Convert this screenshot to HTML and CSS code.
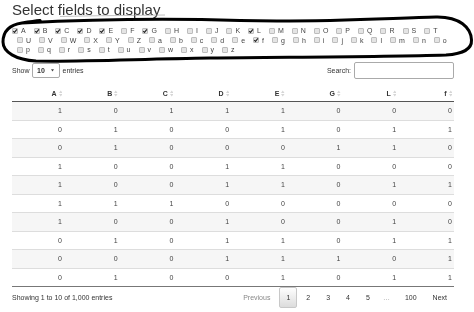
FILE: index.html
```html
<!DOCTYPE html>
<html>
<head>
<meta charset="utf-8">
<link rel="stylesheet" href="styles.css">
</head>
<body>
<div class="page">
  <h3 class="title">Select fields to display</h3>
  <div class="fields">
    <label class="opt"><span class="cb on"><svg viewBox="0 0 6 6"><path d="M1.2 3.1 L2.5 4.4 L4.9 1.4"/></svg></span><span class="lt">A</span></label>
    <label class="opt"><span class="cb on"><svg viewBox="0 0 6 6"><path d="M1.2 3.1 L2.5 4.4 L4.9 1.4"/></svg></span><span class="lt">B</span></label>
    <label class="opt"><span class="cb on"><svg viewBox="0 0 6 6"><path d="M1.2 3.1 L2.5 4.4 L4.9 1.4"/></svg></span><span class="lt">C</span></label>
    <label class="opt"><span class="cb on"><svg viewBox="0 0 6 6"><path d="M1.2 3.1 L2.5 4.4 L4.9 1.4"/></svg></span><span class="lt">D</span></label>
    <label class="opt"><span class="cb on"><svg viewBox="0 0 6 6"><path d="M1.2 3.1 L2.5 4.4 L4.9 1.4"/></svg></span><span class="lt">E</span></label>
    <label class="opt"><span class="cb"></span><span class="lt">F</span></label>
    <label class="opt"><span class="cb on"><svg viewBox="0 0 6 6"><path d="M1.2 3.1 L2.5 4.4 L4.9 1.4"/></svg></span><span class="lt">G</span></label>
    <label class="opt"><span class="cb"></span><span class="lt">H</span></label>
    <label class="opt"><span class="cb"></span><span class="lt">I</span></label>
    <label class="opt"><span class="cb"></span><span class="lt">J</span></label>
    <label class="opt"><span class="cb"></span><span class="lt">K</span></label>
    <label class="opt"><span class="cb on"><svg viewBox="0 0 6 6"><path d="M1.2 3.1 L2.5 4.4 L4.9 1.4"/></svg></span><span class="lt">L</span></label>
    <label class="opt"><span class="cb"></span><span class="lt">M</span></label>
    <label class="opt"><span class="cb"></span><span class="lt">N</span></label>
    <label class="opt"><span class="cb"></span><span class="lt">O</span></label>
    <label class="opt"><span class="cb"></span><span class="lt">P</span></label>
    <label class="opt"><span class="cb"></span><span class="lt">Q</span></label>
    <label class="opt"><span class="cb"></span><span class="lt">R</span></label>
    <label class="opt"><span class="cb"></span><span class="lt">S</span></label>
    <label class="opt"><span class="cb"></span><span class="lt">T</span></label>
    <label class="opt"><span class="cb"></span><span class="lt">U</span></label>
    <label class="opt"><span class="cb"></span><span class="lt">V</span></label>
    <label class="opt"><span class="cb"></span><span class="lt">W</span></label>
    <label class="opt"><span class="cb"></span><span class="lt">X</span></label>
    <label class="opt"><span class="cb"></span><span class="lt">Y</span></label>
    <label class="opt"><span class="cb"></span><span class="lt">Z</span></label>
    <label class="opt"><span class="cb"></span><span class="lt">a</span></label>
    <label class="opt"><span class="cb"></span><span class="lt">b</span></label>
    <label class="opt"><span class="cb"></span><span class="lt">c</span></label>
    <label class="opt"><span class="cb"></span><span class="lt">d</span></label>
    <label class="opt"><span class="cb"></span><span class="lt">e</span></label>
    <label class="opt"><span class="cb on"><svg viewBox="0 0 6 6"><path d="M1.2 3.1 L2.5 4.4 L4.9 1.4"/></svg></span><span class="lt">f</span></label>
    <label class="opt"><span class="cb"></span><span class="lt">g</span></label>
    <label class="opt"><span class="cb"></span><span class="lt">h</span></label>
    <label class="opt"><span class="cb"></span><span class="lt">i</span></label>
    <label class="opt"><span class="cb"></span><span class="lt">j</span></label>
    <label class="opt"><span class="cb"></span><span class="lt">k</span></label>
    <label class="opt"><span class="cb"></span><span class="lt">l</span></label>
    <label class="opt"><span class="cb"></span><span class="lt">m</span></label>
    <label class="opt"><span class="cb"></span><span class="lt">n</span></label>
    <label class="opt"><span class="cb"></span><span class="lt">o</span></label>
    <label class="opt"><span class="cb"></span><span class="lt">p</span></label>
    <label class="opt"><span class="cb"></span><span class="lt">q</span></label>
    <label class="opt"><span class="cb"></span><span class="lt">r</span></label>
    <label class="opt"><span class="cb"></span><span class="lt">s</span></label>
    <label class="opt"><span class="cb"></span><span class="lt">t</span></label>
    <label class="opt"><span class="cb"></span><span class="lt">u</span></label>
    <label class="opt"><span class="cb"></span><span class="lt">v</span></label>
    <label class="opt"><span class="cb"></span><span class="lt">w</span></label>
    <label class="opt"><span class="cb"></span><span class="lt">x</span></label>
    <label class="opt"><span class="cb"></span><span class="lt">y</span></label>
    <label class="opt"><span class="cb"></span><span class="lt">z</span></label>
  </div>

  <div class="controls">
    <div class="length">Show <span class="sel"><span class="selv">10</span><svg class="caret" viewBox="0 0 4 3"><path d="M0 0 H4 L2 3 Z"/></svg></span> entries</div>
    <div class="search">Search: <span class="inp"></span></div>
  </div>

  <table class="grid">
    <colgroup><col class="c1"><col><col><col><col><col><col><col></colgroup>
    <thead>
      <tr>
        <th>A<svg class="sort" viewBox="0 0 4 8"><path d="M0 3.4 L2 0.6 L4 3.4 Z M0 4.6 L2 7.4 L4 4.6 Z"/></svg></th>
        <th>B<svg class="sort" viewBox="0 0 4 8"><path d="M0 3.4 L2 0.6 L4 3.4 Z M0 4.6 L2 7.4 L4 4.6 Z"/></svg></th>
        <th>C<svg class="sort" viewBox="0 0 4 8"><path d="M0 3.4 L2 0.6 L4 3.4 Z M0 4.6 L2 7.4 L4 4.6 Z"/></svg></th>
        <th>D<svg class="sort" viewBox="0 0 4 8"><path d="M0 3.4 L2 0.6 L4 3.4 Z M0 4.6 L2 7.4 L4 4.6 Z"/></svg></th>
        <th>E<svg class="sort" viewBox="0 0 4 8"><path d="M0 3.4 L2 0.6 L4 3.4 Z M0 4.6 L2 7.4 L4 4.6 Z"/></svg></th>
        <th>G<svg class="sort" viewBox="0 0 4 8"><path d="M0 3.4 L2 0.6 L4 3.4 Z M0 4.6 L2 7.4 L4 4.6 Z"/></svg></th>
        <th>L<svg class="sort" viewBox="0 0 4 8"><path d="M0 3.4 L2 0.6 L4 3.4 Z M0 4.6 L2 7.4 L4 4.6 Z"/></svg></th>
        <th>f<svg class="sort" viewBox="0 0 4 8"><path d="M0 3.4 L2 0.6 L4 3.4 Z M0 4.6 L2 7.4 L4 4.6 Z"/></svg></th>
      </tr>
    </thead>
    <tbody>
      <tr><td>1</td><td>0</td><td>1</td><td>1</td><td>1</td><td>0</td><td>0</td><td>0</td></tr>
      <tr><td>0</td><td>1</td><td>0</td><td>0</td><td>1</td><td>0</td><td>1</td><td>1</td></tr>
      <tr><td>0</td><td>1</td><td>0</td><td>0</td><td>0</td><td>1</td><td>1</td><td>0</td></tr>
      <tr><td>1</td><td>0</td><td>0</td><td>1</td><td>1</td><td>0</td><td>0</td><td>0</td></tr>
      <tr><td>1</td><td>0</td><td>0</td><td>1</td><td>1</td><td>0</td><td>1</td><td>1</td></tr>
      <tr><td>1</td><td>1</td><td>1</td><td>0</td><td>0</td><td>0</td><td>0</td><td>0</td></tr>
      <tr><td>1</td><td>0</td><td>0</td><td>1</td><td>0</td><td>0</td><td>1</td><td>0</td></tr>
      <tr><td>0</td><td>1</td><td>0</td><td>1</td><td>1</td><td>0</td><td>1</td><td>1</td></tr>
      <tr><td>0</td><td>0</td><td>0</td><td>1</td><td>1</td><td>1</td><td>0</td><td>1</td></tr>
      <tr><td>0</td><td>1</td><td>0</td><td>0</td><td>1</td><td>0</td><td>1</td><td>1</td></tr>
    </tbody>
  </table>

  <div class="footer">
    <div class="info">Showing 1 to 10 of 1,000 entries</div>
    <div class="pager">
      <span class="pb prev">Previous</span>
      <span class="pb cur">1</span>
      <span class="pb">2</span>
      <span class="pb">3</span>
      <span class="pb">4</span>
      <span class="pb">5</span>
      <span class="ell">…</span>
      <span class="pb">100</span>
      <span class="pb next">Next</span>
    </div>
  </div>
</div>

<svg class="scribble" viewBox="0 0 474 70" width="474" height="70">
  <path class="thin" d="M60 16.5 C 100 15.5 130 15.5 165 15"/>
  <path class="loop" d="M22 23 C 80 20 160 18 240 20.5 C 320 22.5 390 18 436 17 C 460 16.5 471 28 471.5 40 C 472 50 462 54 446 55 C 380 57 300 57 210 58 C 140 59 80 62 36 61 C 16 60 3 52 3 42 C 3 32 9 25 22 23 C 28 22 34 21 40 20.5"/>
</svg>
</body>
</html>
```

FILE: styles.css
```css
html, body {
  margin: 0;
  padding: 0;
  background: #fff;
}
body {
  position: relative;
  width: 474px;
  height: 312px;
  overflow: hidden;
  font-family: "Liberation Sans", Arial, sans-serif;
  color: #333;
}
.page {
  padding: 0 20px 0 12px;
  filter: grayscale(1);
}
.title {
  margin: 0;
  padding-top: 2px;
  font-size: 15px;
  line-height: 16px;
  font-weight: normal;
  color: #333;
}
.fields {
  margin-top: 8px;
  display: flex;
  flex-wrap: wrap;
  font-size: 7px;
  line-height: 9.5px;
  color: #444;
}
.opt {
  display: inline-flex;
  align-items: center;
  height: 9.5px;
  margin-left: 5px;
  padding-right: 3px;
}
.opt:first-child {
  margin-left: 0;
}
.cb {
  width: 6px;
  height: 6px;
  box-sizing: border-box;
  border: 1px solid #bdbdbd;
  background: #e4e4e4;
  border-radius: 1px;
  display: inline-block;
  position: relative;
}
.cb svg {
  position: absolute;
  left: -1px;
  top: -1px;
  width: 6px;
  height: 6px;
}
.cb svg path {
  fill: none;
  stroke: #222;
  stroke-width: 1.1;
}
.lt {
  margin-left: 3px;
}
.controls {
  margin-top: 7.5px;
  height: 17px;
  display: flex;
  justify-content: space-between;
  align-items: center;
  font-size: 7px;
}
.length {
  display: flex;
  align-items: center;
}
.sel {
  width: 28px;
  height: 15px;
  box-sizing: border-box;
  border: 1px solid #aaa;
  border-radius: 2px;
  margin: 0 2.5px;
  padding: 0 5px 0 4px;
  display: inline-flex;
  align-items: center;
  justify-content: space-between;
  font-weight: bold;
}
.caret {
  width: 3px;
  height: 2.5px;
}
.caret path {
  fill: #444;
}
.search {
  display: flex;
  align-items: center;
}
.inp {
  width: 100px;
  height: 17px;
  box-sizing: border-box;
  border: 1px solid #aaa;
  border-radius: 2px;
  margin-left: 3px;
}
.grid {
  margin-top: 8px;
  width: 442px;
  table-layout: fixed;
  border-collapse: separate;
  border-spacing: 0;
  font-size: 7px;
}
.grid col.c1 {
  width: 52px;
}
.grid th {
  text-align: right;
  font-weight: bold;
  padding: 0 2px 0 0;
  height: 14px;
  line-height: 14px;
  border-bottom: 1.5px solid #555;
  color: #333;
  white-space: nowrap;
}
.sort {
  width: 3.5px;
  height: 7px;
  margin-left: 2px;
  vertical-align: -1px;
}
.sort path {
  fill: #d6d6d6;
}
.grid td {
  text-align: right;
  padding: 0 2px 0 0;
  line-height: 17.5px;
  border-top: 1px solid #ddd;
  color: #444;
}
.grid tbody tr:first-child td {
  border-top: none;
}
.grid tbody tr:nth-child(odd) td {
  background: #f6f6f6;
}
.grid tbody tr:last-child td {
  border-bottom: 1px solid #777;
}
.footer {
  margin-top: -1px;
  height: 22px;
  display: flex;
  justify-content: space-between;
  align-items: center;
  font-size: 7px;
}
.pager {
  display: flex;
  align-items: center;
}
.pb {
  display: inline-block;
  padding: 0 6px;
  margin-left: 2px;
  border: 1px solid transparent;
  border-radius: 2px;
  height: 19px;
  line-height: 19px;
  color: #333;
}
.pb.prev {
  margin-left: 0;
  color: #888;
}
.pb.cur {
  border-color: #c8c8c8;
  background: linear-gradient(#fefefe, #dcdcdc);
}
.ell {
  padding: 0 6px;
  color: #999;
}
.scribble {
  position: absolute;
  left: 0;
  top: 0;
  pointer-events: none;
}
.scribble .loop {
  fill: none;
  stroke: #000;
  stroke-width: 3;
  stroke-linecap: round;
}
.scribble .thin {
  fill: none;
  stroke: #999;
  stroke-width: 0.6;
}
```
